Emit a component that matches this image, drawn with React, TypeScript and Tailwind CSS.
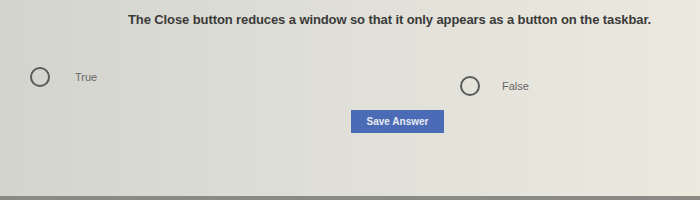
export default function App() {
  return (
    <div className="relative w-[700px] h-[200px] overflow-hidden bg-gradient-to-r from-[#d3d4cd] via-[#e0e0d8] to-[#ece9df] font-['Liberation_Sans',Arial,sans-serif]">
      <div className="flex flex-col h-full">
        <div className="pl-[128px] pt-[12px] text-[13px] leading-[15px] font-bold text-[#3a3a3a] tracking-[-0.1px] whitespace-nowrap">
          The Close button reduces a window so that it only appears as a button on the taskbar.
        </div>
        <div className="grid grid-cols-[430px_1fr] items-start pl-[30px] mt-[40px]">
          <div className="flex items-center gap-[25px]">
            <span className="w-[20px] h-[20px] rounded-full border-2 border-[#5a5a5a]"></span>
            <span className="text-[11px] text-[#666]">True</span>
          </div>
          <div className="flex items-center gap-[22px] mt-[9px]">
            <span className="w-[20px] h-[20px] rounded-full border-2 border-[#5a5a5a]"></span>
            <span className="text-[11px] text-[#666]">False</span>
          </div>
        </div>
        <div className="pl-[351px] mt-[14px]">
          <div className="w-[93px] h-[23px] bg-[#4b6bb6] flex items-center justify-center text-[10px] font-bold text-[#e6eaf5]">
            Save Answer
          </div>
        </div>
        <div className="mt-auto h-[4px] bg-[#8a8a84]"></div>
      </div>
    </div>
  );
}
